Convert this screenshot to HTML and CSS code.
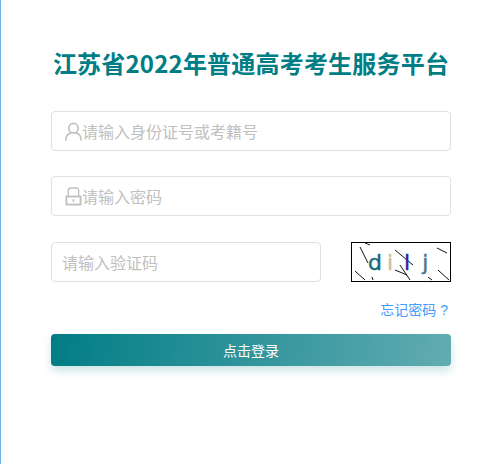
FILE: index.html
```html
<!DOCTYPE html>
<html lang="zh-CN">
  <head>
    <meta charset="UTF-8" />
    <title>江苏省2022年普通高考考生服务平台</title>
    <link rel="stylesheet" href="styles.css">
  </head>
  <body>
    <div class="container">
      <div class="heading">江苏省2022年普通高考考生服务平台</div>
      <form class="login">
        <div class="field">
          <svg class="icon" viewBox="0 0 18 20" width="17" height="19">
            <circle cx="9" cy="6.5" r="5" fill="none" stroke="#c0c0c0" stroke-width="1.8"/>
            <path d="M1 19.5v-1.5c0-3.5 3-6 5.5-6.6M17 19.5v-1.5c0-3.5-3-6-5.5-6.6" fill="none" stroke="#c0c0c0" stroke-width="1.8"/>
          </svg>
          <span class="placeholder">请输入身份证号或考籍号</span>
        </div>
        <div class="field">
          <svg class="icon" viewBox="0 0 18 20" width="17" height="19">
            <path d="M3.5 9.5V3.5a2.5 2.5 0 0 1 2.5-2.5h6a2.5 2.5 0 0 1 2.5 2.5V9.5" fill="none" stroke="#c0c0c0" stroke-width="1.5"/>
            <rect x="1.5" y="10" width="15" height="8.5" fill="none" stroke="#c0c0c0" stroke-width="2"/>
            <rect x="8" y="13" width="2" height="2.5" fill="#c0c0c0"/>
          </svg>
          <span class="placeholder">请输入密码</span>
        </div>
        <div class="code-row">
          <div class="field code-field">
            <span class="placeholder">请输入验证码</span>
          </div>
          <div class="captcha">
            <svg class="noise" viewBox="0 0 98 38" width="98" height="38">
              <path d="M8 4l8 16M13 0l5 2M43 7l18 15M85 5l10 5M3 28l10 9M20 34l1 3M43 27l12 5M48 22l10 15M76 34l4 3M86 27l11 10" stroke="#111" stroke-width="1" fill="none"/>
            </svg>
            <span class="letter letter-d">d</span>
            <span class="letter letter-i">i</span>
            <span class="letter letter-l">l</span>
            <span class="letter letter-j">j</span>
          </div>
        </div>
        <div class="forgot">忘记密码 ?</div>
        <button type="button" class="login-button">点击登录</button>
      </form>
    </div>
  </body>
</html>
```

FILE: styles.css
```css
html,
body {
  margin: 0;
  height: 100%;
}
body {
  background-color: #fff;
  font-family: "Noto Sans CJK SC", "Liberation Sans", sans-serif;
}
.container {
  box-sizing: border-box;
  height: 464px;
  padding: 46px 49px 0 50px;
  border-left: 1px solid #6db3e8;
}
.heading {
  height: 34px;
  line-height: 34px;
  font-size: 24px;
  font-weight: bold;
  letter-spacing: 0.2px;
  text-align: center;
  white-space: nowrap;
  color: #017d85;
}
.login {
  margin-top: 31px;
}
.field {
  box-sizing: border-box;
  display: flex;
  align-items: center;
  height: 40px;
  margin-bottom: 25px;
  padding-left: 13px;
  border: 1px solid #dcdfe6;
  border-radius: 4px;
}
.icon {
  flex: none;
}
.placeholder {
  font-size: 16px;
  color: #c0c0c0;
}
.code-row {
  display: flex;
  justify-content: space-between;
  margin-top: 26px;
}
.code-field {
  width: 270px;
  margin-bottom: 0;
  padding-left: 10px;
}
.captcha {
  box-sizing: border-box;
  position: relative;
  display: flex;
  align-items: center;
  width: 100px;
  height: 40px;
  padding-left: 16px;
  border: 1px solid #000;
  font-family: "DejaVu Sans", sans-serif;
  font-size: 22px;
}
.noise {
  position: absolute;
  left: 0;
  top: 0;
}
.letter {
  position: relative;
  -webkit-text-stroke: 0.4px currentColor;
}
.letter-d {
  color: #156a78;
}
.letter-i {
  margin-left: 5px;
  color: #c9c39a;
}
.letter-l {
  margin-left: 11px;
  color: #2a22a8;
}
.letter-j {
  margin-left: 12px;
  color: #4f7486;
}
.forgot {
  margin-top: 18px;
  padding-right: 3px;
  height: 20px;
  line-height: 20px;
  font-family: "Liberation Sans", "Noto Sans CJK SC", sans-serif;
  font-size: 14px;
  text-align: right;
  color: #409eff;
}
.login-button {
  display: block;
  width: 100%;
  height: 32px;
  margin-top: 14px;
  border: 0;
  border-radius: 4px;
  background: linear-gradient(100deg, #017d85, #62acb2);
  box-shadow: 0 5px 10px rgba(1, 125, 133, 0.2);
  font-family: inherit;
  font-size: 14px;
  color: #fff;
}
```
